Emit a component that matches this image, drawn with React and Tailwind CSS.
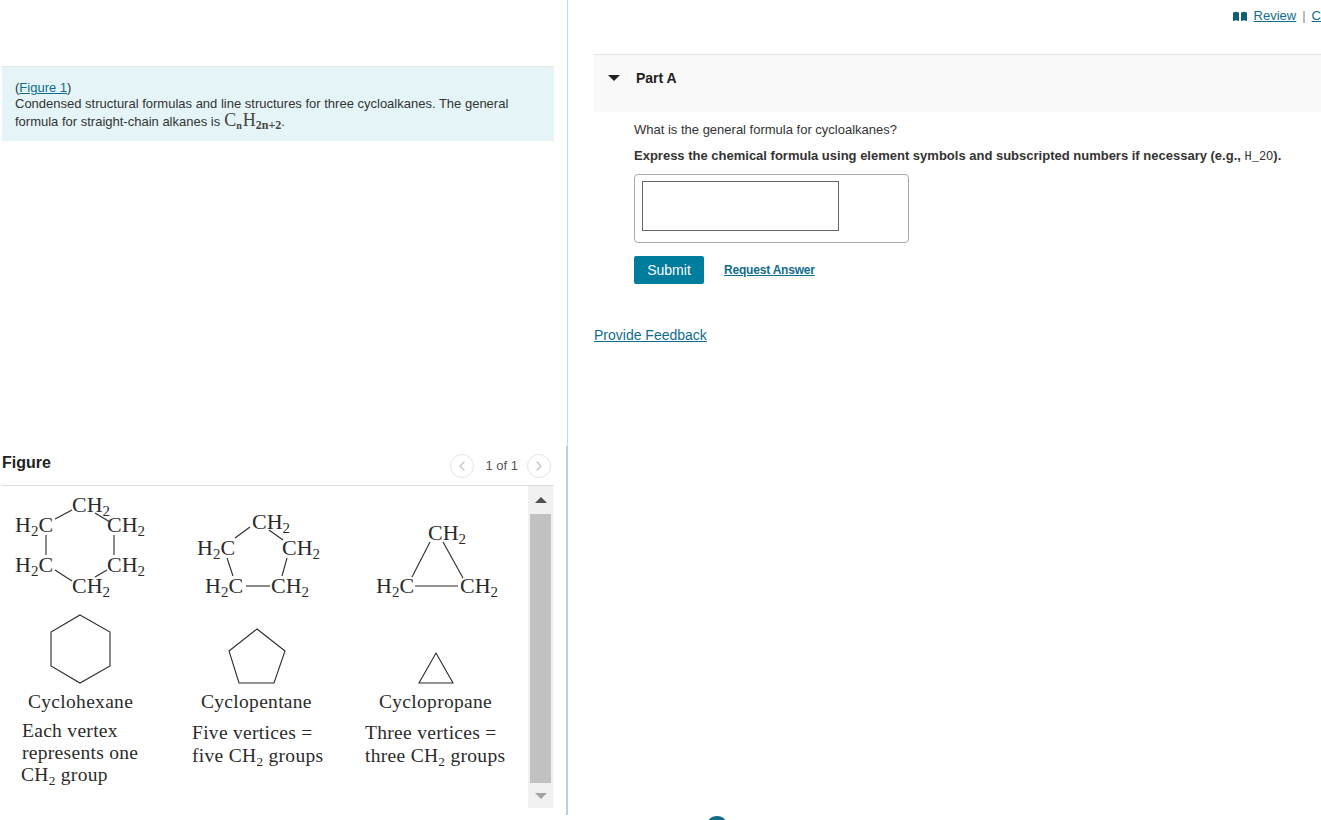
import { ChevronLeft, ChevronRight } from "lucide-react";

const serif = { fontFamily: '"Liberation Serif", serif' };

/* formula text: "2" written as _2 becomes a subscript */
function Chem({ x, y, children, size = 22, spacing = 0 }) {
  const parts = children.split("_");
  return (
    <text x={x} y={y} fontSize={size} letterSpacing={spacing} fill="#2b2b2b" style={serif}>
      {parts.map((p, i) =>
        i === 0 ? (
          <tspan key={i}>{p}</tspan>
        ) : (
          <tspan key={i}>
            <tspan dy="4" fontSize={size * 0.68}>
              {p[0]}
            </tspan>
            <tspan dy="-4">{p.slice(1)}</tspan>
          </tspan>
        )
      )}
    </text>
  );
}

function Label({ x, y, children }) {
  return <Chem x={x} y={y} size={19.5} spacing={0.3}>{children}</Chem>;
}

const bonds = [
  // cyclohexane
  [55, 519, 72, 510], [95, 513, 110, 522], [46, 535, 46, 555], [114, 535, 114, 555],
  [55, 570, 72, 581], [95, 577, 107, 570],
  // cyclopentane
  [235, 538, 250, 527], [269, 530, 283, 540], [227, 558, 233, 576], [287, 558, 282, 576],
  [246, 586, 270, 586],
  // cyclopropane
  [430, 542, 412, 577], [443, 542, 463, 578], [415, 586, 458, 586],
];

function FigureDrawing() {
  return (
    <svg width="528" height="322" viewBox="0 486 528 322" className="block shrink-0">
      <g stroke="#2b2b2b" strokeWidth="1.1" fill="none">
        {bonds.map((b, i) => (
          <line key={i} x1={b[0]} y1={b[1]} x2={b[2]} y2={b[3]} />
        ))}
        <polygon points="80,615 110,632 110,666 80,683 51,666 51,632" />
        <polygon points="257,629 285,651 274,683 239,683 229,651" />
        <polygon points="436,653 453,683 419,683" />
      </g>

      <Chem x={72} y={512}>CH_2</Chem>
      <Chem x={15} y={532}>H_2C</Chem>
      <Chem x={107} y={532}>CH_2</Chem>
      <Chem x={15} y={572}>H_2C</Chem>
      <Chem x={107} y={572}>CH_2</Chem>
      <Chem x={72} y={593}>CH_2</Chem>

      <Chem x={252} y={529}>CH_2</Chem>
      <Chem x={197} y={555}>H_2C</Chem>
      <Chem x={282} y={555}>CH_2</Chem>
      <Chem x={205} y={593}>H_2C</Chem>
      <Chem x={271} y={593}>CH_2</Chem>

      <Chem x={428} y={540}>CH_2</Chem>
      <Chem x={376} y={593}>H_2C</Chem>
      <Chem x={460} y={593}>CH_2</Chem>

      <Label x={28} y={708}>Cyclohexane</Label>
      <Label x={22} y={737}>Each vertex</Label>
      <Label x={22} y={759}>represents one</Label>
      <Label x={21} y={781}>CH_2 group</Label>

      <Label x={201} y={708}>Cyclopentane</Label>
      <Label x={192} y={739}>Five vertices =</Label>
      <Label x={192} y={762}>five CH_2 groups</Label>

      <Label x={379} y={708}>Cyclopropane</Label>
      <Label x={365} y={739}>Three vertices =</Label>
      <Label x={365} y={762}>three CH_2 groups</Label>
    </svg>
  );
}

function Pager() {
  return (
    <div className="mr-[3px] flex items-center text-[13px] text-[#555]">
      <button className="flex h-[24px] w-[24px] items-center justify-center rounded-full border border-[#e4e4e4] text-[#c4c4c4]">
        <ChevronLeft size={16} />
      </button>
      <span className="mr-[9px] ml-[11px]">1 of 1</span>
      <button className="flex h-[24px] w-[24px] items-center justify-center rounded-full border border-[#e4e4e4] text-[#c4c4c4]">
        <ChevronRight size={16} />
      </button>
    </div>
  );
}

function Scrollbar() {
  return (
    <div className="flex w-[25px] shrink-0 flex-col items-center bg-[#f1f1f1]">
      <div className="flex h-[28px] items-center justify-center">
        <div className="h-0 w-0 border-x-[6px] border-b-[6px] border-x-transparent border-b-[#505050]" />
      </div>
      <div className="h-[269px] w-[21px] bg-[#c1c1c1]" />
      <div className="flex h-[25px] items-center justify-center">
        <div className="h-0 w-0 border-x-[6px] border-t-[6px] border-x-transparent border-t-[#a3a3a3]" />
      </div>
    </div>
  );
}

export default function App() {
  return (
    <div
      className="relative flex h-[820px] w-[1321px] overflow-hidden bg-white text-[#333]"
      style={{ fontFamily: '"Liberation Sans", Arial, sans-serif' }}
    >
      {/* Left column */}
      <div className="flex w-[568px] shrink-0 flex-col">
        <div className="h-[446px] shrink-0 border-r border-[#c3d8ea] pt-[66px]">
          <div className="ml-[2px] h-[75px] w-[552px] border-t border-[#e8e8e8] bg-[#e5f5f7] px-[13px] pt-[13px] text-[13px] leading-[16px]">
            <div>
              (<a className="text-[#0f6d8c] underline">Figure 1</a>)
            </div>
            <div>Condensed structural formulas and line structures for three cycloalkanes. The general</div>
            <div className="flex h-[16px] items-baseline">
              <span>formula for straight-chain alkanes is</span>
              <span className="ml-[4px] text-[18px] leading-[16px] text-[#444]" style={serif}>C</span>
              <span className="relative top-[3px] text-[10px] leading-[16px] font-bold text-[#444]" style={serif}>n</span>
              <span className="ml-[1px] text-[18px] leading-[16px] text-[#444]" style={serif}>H</span>
              <span className="relative top-[3px] text-[12px] leading-[16px] font-bold text-[#444]" style={serif}>2n+2</span>
              <span>.</span>
            </div>
          </div>
        </div>

        <div className="h-[369px] shrink-0 border-r-2 border-[#bccfda]">
          <div className="ml-[2px] flex h-[40px] w-[552px] items-center justify-between border-b border-[#dcdcdc] pt-[1px]">
            <span className="relative -top-[3px] text-[16px] font-bold text-[#222]">Figure</span>
            <Pager />
          </div>

          <div className="ml-[2px] flex h-[322px] w-[553px]">
            <div className="-ml-[2px] w-[528px] shrink-0">
              <FigureDrawing />
            </div>
            <Scrollbar />
          </div>
        </div>
      </div>

      {/* Right column */}
      <div className="min-w-0 flex-1">
        <div className="flex h-[54px] justify-end overflow-hidden pt-[8px] text-[13px] leading-[16px] whitespace-nowrap">
          <div className="flex h-[16px] items-center">
            <a className="flex items-center text-[#0f6d8c] underline">
              <svg width="14" height="10" viewBox="0 0 14 10" className="mr-[7px] fill-[#0f5f7a]">
                <path d="M0 1.5 3 .8l3 .7V10L3 9.3 0 10zM8 1.5l3-.7 3 .7V10l-3-.7L8 10z" />
              </svg>
              Review
            </a>
            <span className="mx-[6px] text-[#888]">|</span>
            <a className="text-[#0f6d8c] underline">C</a>
          </div>
        </div>

        <div className="ml-[26px] flex h-[58px] items-start border-t border-[#e4e4e4] bg-[#f9f9f9] pt-[15px]">
          <div className="mt-[5px] ml-[14px] h-0 w-0 border-x-[6px] border-t-[6px] border-x-transparent border-t-[#222]" />
          <span className="ml-[16px] text-[14px] leading-[16px] font-bold text-[#222]">Part A</span>
        </div>

        <div className="ml-[66px] pt-[10px] text-[13px] leading-[16px]">
          <p>What is the general formula for cycloalkanes?</p>
          <p className="mt-[10px] font-bold whitespace-nowrap">
            Express the chemical formula using element symbols and subscripted numbers if necessary (e.g.,{" "}
            <span className="text-[12px] font-normal" style={{ fontFamily: '"Liberation Mono", monospace' }}>
              H_2O
            </span>
            ).
          </p>

          <div className="mt-[9px] h-[69px] w-[275px] rounded-[4px] border border-[#aaa] pt-[6px] pl-[7px]">
            <div className="h-[50px] w-[197px] border border-[#666]" />
          </div>

          <div className="mt-[13px] flex items-center">
            <button className="h-[28px] w-[70px] rounded-[2px] bg-[#007c9c] text-[14px] text-white">Submit</button>
            <a className="ml-[20px] text-[12px] font-bold tracking-[-0.2px] text-[#0f6d8c] underline">Request Answer</a>
          </div>
        </div>

        <a className="mt-[43px] ml-[26px] block text-[14px] leading-[16px] text-[#0f6d8c] underline">
          Provide Feedback
        </a>
      </div>

      {/* chat bubble cut off by the window edge */}
      <div className="absolute top-[816px] left-[706px] h-[22px] w-[22px] rounded-full bg-[#0f6d8c]" />
    </div>
  );
}
